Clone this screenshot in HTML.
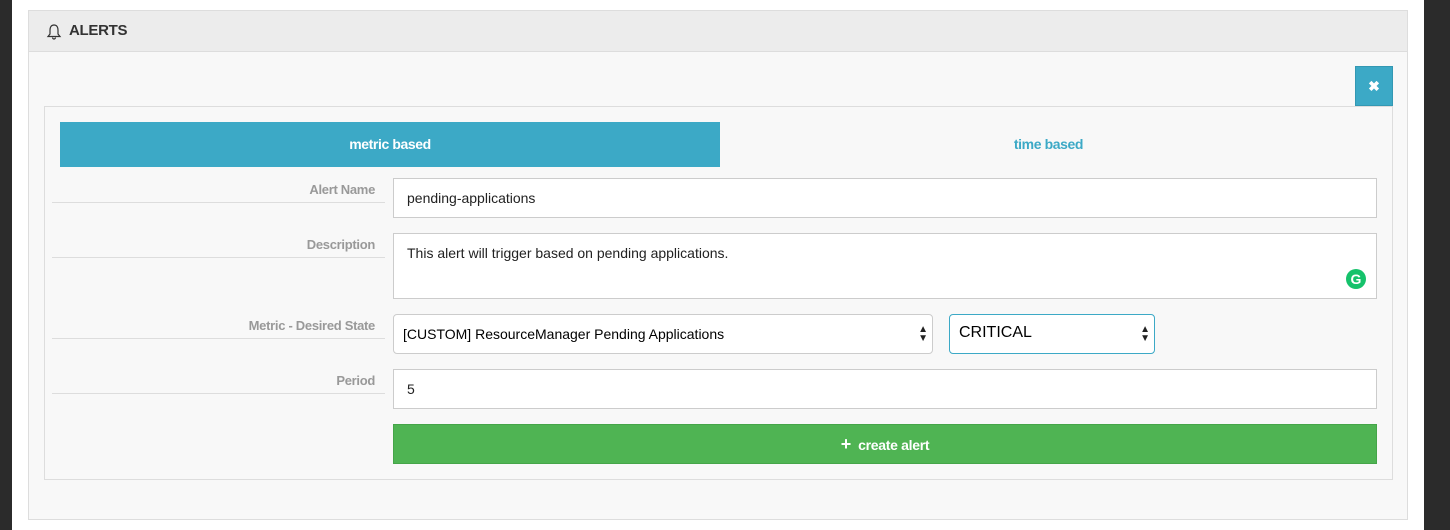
<!DOCTYPE html><html><head><style>
body{margin:0;width:1450px;height:530px;background:#2b2b2b;overflow:hidden;font-family:"Liberation Sans",sans-serif;position:relative}
.page{position:absolute;left:12px;top:0;width:1412px;height:530px;background:#fff}
.panel{position:absolute;left:28px;top:10px;width:1380px;height:510px;background:#f8f8f8;border:1px solid #ddd;box-sizing:border-box}
.hdr{height:41px;background:#ececec;border-bottom:1px solid #ddd;box-sizing:border-box;font-weight:bold;font-size:15px;color:#333;line-height:40px;padding-left:40px;position:relative;letter-spacing:-.3px}
.close{position:absolute;left:1355px;top:66px;width:38px;height:40px;background:#3ca9c6;border:1px solid #3398b3;box-sizing:border-box;color:#fff;font-weight:bold;font-size:14px;text-align:center;line-height:38px}
.inner{position:absolute;left:44px;top:106px;width:1349px;height:374px;border:1px solid #ddd;box-sizing:border-box;background:#f8f8f8}
.tab{position:absolute;top:122px;height:45px;line-height:45px;text-align:center;font-weight:bold;font-size:14px;letter-spacing:-.4px}
.lbl{position:absolute;left:52px;width:333px;border-bottom:1px solid #ddd;text-align:right;box-sizing:border-box;padding-right:10px;font-weight:bold;font-size:13px;color:#999;height:24px;letter-spacing:-.3px;padding-top:3px}
.inp{position:absolute;left:393px;width:984px;background:#fff;border:1px solid #ccc;box-sizing:border-box;font-size:14px;color:#222;padding-left:13px}
.sel{position:absolute;background:#fff;border:1px solid #ccc;border-radius:4px;box-sizing:border-box;font-size:14px;padding-left:9px;line-height:38px}
.arr{position:absolute;right:4px;top:10px;font-size:10px;line-height:9px;color:#222}
</style></head><body>
<div class="page"></div>
<div class="panel"><div class="hdr">ALERTS
<svg style="position:absolute;left:17px;top:12px" width="16" height="17" viewBox="0 0 16 17"><path d="M8 2C5 2 4 4.5 4 7v4l-2 2.5h12L12 11V7c0-2.5-1-5-4-5z M6.5 14.5a1.5 1.5 0 003 0" fill="none" stroke="#333" stroke-width="1.2"/></svg></div></div>
<div class="close">✖</div>
<div class="inner"></div>
<div class="tab" style="left:60px;width:660px;background:#3ca9c6;color:#fff">metric based</div>
<div class="tab" style="left:720px;width:657px;color:#3ca9c6">time based</div>
<div class="lbl" style="top:179px">Alert Name</div>
<div class="inp" style="top:178px;height:40px;line-height:38px">pending-applications</div>
<div class="lbl" style="top:234px">Description</div>
<div class="inp" style="top:233px;height:66px;padding-top:10px;line-height:18px">This alert will trigger based on pending applications.
<div style="position:absolute;right:10px;bottom:9px;width:20px;height:20px;border-radius:50%;background:#15c26b;color:#fff;font-size:14px;font-weight:bold;text-align:center;line-height:20px">G</div></div>
<div class="lbl" style="top:315px">Metric - Desired State</div>
<div class="sel" style="left:393px;top:314px;width:540px;height:40px">[CUSTOM] ResourceManager Pending Applications<div class="arr">▲<br>▼</div></div>
<div class="sel" style="left:949px;top:314px;width:206px;height:40px;border-color:#3ca9c6;font-size:16px;line-height:36px">CRITICAL<div class="arr">▲<br>▼</div></div>
<div class="lbl" style="top:370px">Period</div>
<div class="inp" style="top:369px;height:40px;line-height:38px">5</div>
<div style="position:absolute;left:393px;top:424px;width:984px;height:40px;background:#4fb453;border:1px solid #45a549;box-sizing:border-box;color:#fff;font-weight:bold;font-size:14px;text-align:center;line-height:38px;letter-spacing:-.3px"><span style="font-size:18px">+</span>&nbsp; create alert</div>
</body></html>
